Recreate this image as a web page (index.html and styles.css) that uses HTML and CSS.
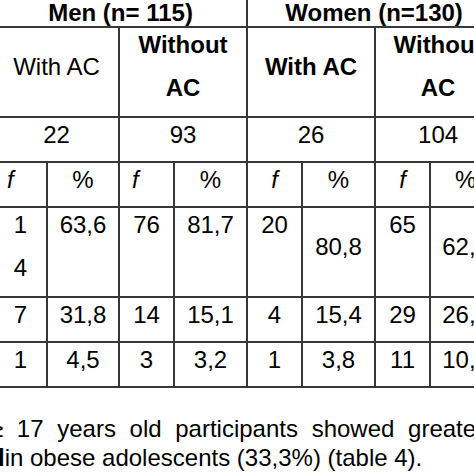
FILE: index.html
```html
<!DOCTYPE html>
<html>
<head>
<meta charset="utf-8">
<link rel="stylesheet" href="styles.css">
</head>
<body>
<div class="page">
  <table class="t">
    <colgroup>
      <col class="cf1"><col class="cp1"><col class="cf"><col class="cp"><col class="cf"><col class="cp"><col class="cf"><col class="cp4">
    </colgroup>
    <tr class="r-group">
      <td colspan="4"><div>Men (n= 115)</div></td>
      <td colspan="4"><div>Women (n=130)</div></td>
    </tr>
    <tr class="r-ac tall">
      <td colspan="2" class="mid"><div>With AC</div></td>
      <td colspan="2" class="mid bold"><div>Without AC</div></td>
      <td colspan="2" class="mid bold"><div>With AC</div></td>
      <td colspan="2" class="mid bold"><div>Without AC</div></td>
    </tr>
    <tr>
      <td colspan="2"><div>22</div></td>
      <td colspan="2"><div>93</div></td>
      <td colspan="2"><div>26</div></td>
      <td colspan="2"><div>104</div></td>
    </tr>
    <tr>
      <td class="f left"><div>f</div></td>
      <td><div>%</div></td>
      <td class="f left"><div>f</div></td>
      <td><div>%</div></td>
      <td class="f"><div>f</div></td>
      <td><div>%</div></td>
      <td class="f"><div>f</div></td>
      <td><div>%</div></td>
    </tr>
    <tr class="tall">
      <td><div>1<br>4</div></td>
      <td><div>63,6</div></td>
      <td><div>76</div></td>
      <td><div>81,7</div></td>
      <td><div>20</div></td>
      <td class="mid"><div>80,8</div></td>
      <td><div>65</div></td>
      <td class="mid"><div>62,5</div></td>
    </tr>
    <tr>
      <td><div>7</div></td>
      <td><div>31,8</div></td>
      <td><div>14</div></td>
      <td><div>15,1</div></td>
      <td><div>4</div></td>
      <td><div>15,4</div></td>
      <td><div>29</div></td>
      <td><div>26,9</div></td>
    </tr>
    <tr>
      <td><div>1</div></td>
      <td><div>4,5</div></td>
      <td><div>3</div></td>
      <td><div>3,2</div></td>
      <td><div>1</div></td>
      <td><div>3,8</div></td>
      <td><div>11</div></td>
      <td><div>10,6</div></td>
    </tr>
  </table>
  <div class="note">
    <div class="line line1">≥ 17 years old participants showed greater</div>
    <div class="line line2"><b class="cut">l</b>in obese adolescents (33,3%) (table 4).</div>
  </div>
</div>
</body>
</html>
```

FILE: styles.css
```css
html, body {
  margin: 0;
  padding: 0;
  background: #ffffff;
}
body {
  overflow: hidden;
  font-family: "Liberation Sans", Arial, sans-serif;
  color: #000000;
}
.page {
  width: 474px;
  height: 474px;
  overflow: hidden;
}
.t {
  border-collapse: collapse;
  table-layout: fixed;
  width: 507px;
  margin: -5px 0 0 -7px;
  font-size: 24px;
}
.cf1 { width: 53px; }
.cp1 { width: 72px; }
.cf { width: 55px; }
.cp { width: 73px; }
.cp4 { width: 71px; }
.t td {
  border: 2px solid #383838;
  padding: 0;
  text-align: center;
  vertical-align: top;
  line-height: 43px;
}
.t td > div {
  margin: -5px 0 5px;
}
.t .tall td {
  padding-bottom: 2px;
}
.r-group td {
  font-weight: bold;
  line-height: 27px;
  vertical-align: bottom;
}
.t .r-group td > div {
  margin: 0;
  padding-top: 2px;
}
.t td.mid {
  vertical-align: middle;
}
.t td.bold {
  font-weight: bold;
}
.t td.f {
  font-style: italic;
}
.t td.left {
  text-align: left;
  padding-left: 12px;
}
.note {
  margin-top: 26px;
  font-size: 24px;
  line-height: 29px;
}
.line {
  white-space: nowrap;
}
.line1 {
  margin-left: -10px;
  word-spacing: 7px;
}
.line2 {
  margin-left: -2px;
}
.cut {
  font-weight: bold;
}
```
